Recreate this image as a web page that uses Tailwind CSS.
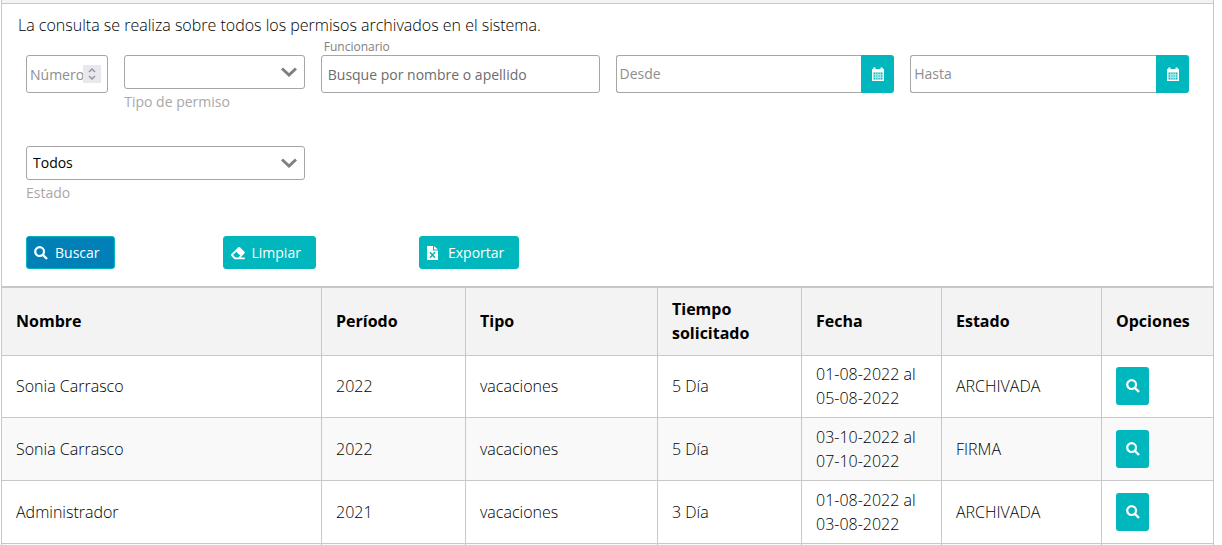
<!DOCTYPE html>
<html lang="es">
<head>
    <meta charset="UTF-8">
    <meta name="viewport" content="width=device-width, initial-scale=1.0">
    <title>Permisos archivados</title>
    <script src="https://cdn.jsdelivr.net/npm/@tailwindcss/browser@4"></script>
    <style>
        body { font-family: 'Open Sans', 'Noto Sans', sans-serif; }
        input[type=number] { appearance: textfield; }
    </style>
</head>
<body class="bg-white text-black">
    <svg class="hidden">
        <symbol id="icon-search" viewBox="0 0 14 14">
            <circle cx="5.6" cy="5.6" r="4.4" fill="none" stroke="currentColor" stroke-width="2.2"/>
            <path d="M9 9l4 4" stroke="currentColor" stroke-width="2.4"/>
        </symbol>
        <symbol id="icon-calendar" viewBox="0 0 14 14">
            <path fill="currentColor" fill-rule="evenodd" d="M1 2h1.300v-1.500h2.200v1.500h5v-1.500h2.200v1.500h1.300v12h-12zM2.500 5.500v7h9v-7z"/>
            <path d="M2.500 7.900h9M2.500 10.200h9M4.800 5.500v7M7 5.500v7M9.200 5.500v7" stroke="currentColor" stroke-width="1" opacity=".8"/>
        </symbol>
        <symbol id="icon-chevron" viewBox="0 0 16 10">
            <path d="M1 1.500l7 6.500 7-6.500" fill="none" stroke="currentColor" stroke-width="3"/>
        </symbol>
    </svg>

    <main class="h-screen overflow-hidden pl-px pr-2">
        <div class="border-x border-[#c8c8c8]">
            <div class="h-1 border-b border-[#c8c8c8] bg-[#f3f3f3]"></div>

            <!-- Filtros -->
            <form class="px-4 pt-[9px] pb-[17px]">
                <p class="font-light leading-6">La consulta se realiza sobre todos los permisos archivados en el sistema.</p>

                <div class="grid grid-cols-12 gap-x-4 px-2 pt-[18px] text-sm">
                    <div class="relative col-span-1 h-[91px]">
                        <input type="number" placeholder="Número" aria-label="Número" class="h-[38px] w-full rounded-[3px] border border-[#a6a6a6] pl-[3px] placeholder:text-[#8e8e8e]">
                        <span class="absolute top-[10px] right-[7px] flex h-[18px] w-[18px] items-center justify-center bg-[#e9e9ed] text-[#8f8f9d]">
                            <svg class="h-3 w-2" viewBox="0 0 8 12" fill="none" stroke="currentColor" stroke-width="1.400"><path d="M1 4l3-3 3 3M1 8l3 3 3-3"/></svg>
                        </span>
                    </div>
                    <div class="relative col-span-2">
                        <select id="tipo" class="block h-[34px] w-full appearance-none rounded-[3px] border border-[#a6a6a6] bg-white px-1.5">
                            <option></option>
                            <option>vacaciones</option>
                        </select>
                        <svg class="pointer-events-none absolute top-3 right-2 h-[10px] w-4 text-[#808080]"><use href="#icon-chevron"/></svg>
                        <label for="tipo" class="mt-[3px] block text-[#a8a8a8]">Tipo de permiso</label>
                    </div>
                    <div class="relative col-span-3">
                        <label for="funcionario" class="absolute -top-4 left-[3px] text-xs text-[#808080]">Funcionario</label>
                        <input id="funcionario" type="text" placeholder="Busque por nombre o apellido" class="h-[38px] w-full rounded-[3px] border border-[#a6a6a6] px-1.5 placeholder:text-[#6c6c6c]">
                    </div>
                    <div class="col-span-3 flex h-[38px]">
                        <input type="text" placeholder="Desde" aria-label="Desde" class="min-w-0 flex-1 rounded-l-[3px] border border-r-0 border-[#a6a6a6] px-[3px] placeholder:text-[#8e8e8e]">
                        <button type="button" aria-label="Abrir calendario desde" class="flex w-[33px] items-center justify-center rounded-r-[3px] bg-[#00b7bd] text-white">
                            <svg class="h-[14px] w-[14px]"><use href="#icon-calendar"/></svg>
                        </button>
                    </div>
                    <div class="col-span-3 flex h-[38px]">
                        <input type="text" placeholder="Hasta" aria-label="Hasta" class="min-w-0 flex-1 rounded-l-[3px] border border-r-0 border-[#a6a6a6] px-[3px] placeholder:text-[#8e8e8e]">
                        <button type="button" aria-label="Abrir calendario hasta" class="flex w-[33px] items-center justify-center rounded-r-[3px] bg-[#00b7bd] text-white">
                            <svg class="h-[14px] w-[14px]"><use href="#icon-calendar"/></svg>
                        </button>
                    </div>

                    <div class="relative col-span-3 h-[90px]">
                        <select id="estado" class="block h-[34px] w-full appearance-none rounded-[3px] border border-[#a6a6a6] bg-white px-1.5">
                            <option>Todos</option>
                            <option>ARCHIVADA</option>
                            <option>FIRMA</option>
                        </select>
                        <svg class="pointer-events-none absolute top-3 right-2 h-[10px] w-4 text-[#808080]"><use href="#icon-chevron"/></svg>
                        <label for="estado" class="mt-[3px] block text-[#a8a8a8]">Estado</label>
                    </div>
                </div>

                <!-- Acciones -->
                <div class="grid grid-cols-12 gap-x-4 px-2 text-sm text-white">
                    <div class="col-span-2">
                        <button type="submit" class="flex h-[33px] items-center gap-[7px] rounded-[3px] border border-[#00b7bd] bg-[#0080b7] pr-[14px] pl-[7px]">
                            <svg class="h-[14px] w-[14px]"><use href="#icon-search"/></svg>
                            Buscar
                        </button>
                    </div>
                    <div class="col-span-2">
                        <button type="reset" class="flex h-[33px] items-center gap-[7px] rounded-[3px] border border-[#00b7bd] bg-[#00b7bd] pr-[14px] pl-[7px]">
                            <svg class="h-[14px] w-[14px]" viewBox="0 0 14 14">
                                <path fill="currentColor" fill-rule="evenodd" d="M.4 8.100L7.200 1.300q.9-.7 1.800 0l4.400 4.400q.8.900 0 1.800l-3.800 3.900h4.200v1.800H3.500L.4 10q-.8-.9 0-1.900zM5.200 5.700L2.100 8.900l2.400 2.500h2.900l1.900-1.800z"/>
                            </svg>
                            Limpiar
                        </button>
                    </div>
                    <div class="col-span-2">
                        <button type="button" class="flex h-[33px] items-center gap-[10px] rounded-[3px] border border-[#00b7bd] bg-[#00b7bd] pr-[14px] pl-[7px]">
                            <svg class="h-[14px] w-[11px]" viewBox="0 0 11 14">
                                <path fill="currentColor" d="M0 0h6v4.500h5V14H0zM7 0l4 3.500H7z"/>
                                <path d="M3 6.200l5 5.600M8 6.200l-5 5.600" stroke="#00b7bd" stroke-width="1.500"/>
                            </svg>
                            Exportar
                        </button>
                    </div>
                </div>
            </form>
        </div>

        <!-- Resultados -->
        <table class="w-full table-fixed border-collapse text-left font-light">
            <colgroup>
                <col>
                <col class="w-36">
                <col class="w-48">
                <col class="w-36">
                <col class="w-[140px]">
                <col class="w-40">
                <col class="w-28">
            </colgroup>
            <thead>
                <tr class="h-[68px] border-t-2 border-[#c8c8c8] bg-[#f3f3f3]">
                    <th class="border-x border-b border-[#c8c8c8] px-[14px] font-bold">Nombre</th>
                    <th class="border-x border-b border-[#c8c8c8] px-[14px] font-bold">Período</th>
                    <th class="border-x border-b border-[#c8c8c8] px-[14px] font-bold">Tipo</th>
                    <th class="border-x border-b border-[#c8c8c8] px-[14px] font-bold">Tiempo solicitado</th>
                    <th class="border-x border-b border-[#c8c8c8] px-[14px] font-bold">Fecha</th>
                    <th class="border-x border-b border-[#c8c8c8] px-[14px] font-bold">Estado</th>
                    <th class="border-x border-b border-[#c8c8c8] px-[14px] font-bold">Opciones</th>
                </tr>
            </thead>
            <tbody>
                <tr class="h-[62px]">
                    <td class="border border-[#c8c8c8] px-[14px]">Sonia Carrasco</td>
                    <td class="border border-[#c8c8c8] px-[14px]">2022</td>
                    <td class="border border-[#c8c8c8] px-[14px]">vacaciones</td>
                    <td class="border border-[#c8c8c8] px-[14px]">5 Día</td>
                    <td class="border border-[#c8c8c8] px-[14px]">01-08-2022 al 05-08-2022</td>
                    <td class="border border-[#c8c8c8] px-[14px]">ARCHIVADA</td>
                    <td class="border border-[#c8c8c8] px-[14px]">
                        <button type="button" aria-label="Ver permiso" class="flex h-[38px] w-[33px] items-center justify-center rounded-[3px] bg-[#00b7bd] text-white">
                            <svg class="h-[14px] w-[14px]"><use href="#icon-search"/></svg>
                        </button>
                    </td>
                </tr>
                <tr class="h-[63px] bg-[#f9f9f9]">
                    <td class="border border-[#c8c8c8] px-[14px]">Sonia Carrasco</td>
                    <td class="border border-[#c8c8c8] px-[14px]">2022</td>
                    <td class="border border-[#c8c8c8] px-[14px]">vacaciones</td>
                    <td class="border border-[#c8c8c8] px-[14px]">5 Día</td>
                    <td class="border border-[#c8c8c8] px-[14px]">03-10-2022 al 07-10-2022</td>
                    <td class="border border-[#c8c8c8] px-[14px]">FIRMA</td>
                    <td class="border border-[#c8c8c8] px-[14px]">
                        <button type="button" aria-label="Ver permiso" class="flex h-[38px] w-[33px] items-center justify-center rounded-[3px] bg-[#00b7bd] text-white">
                            <svg class="h-[14px] w-[14px]"><use href="#icon-search"/></svg>
                        </button>
                    </td>
                </tr>
                <tr class="h-[63px]">
                    <td class="border border-[#c8c8c8] px-[14px]">Administrador</td>
                    <td class="border border-[#c8c8c8] px-[14px]">2021</td>
                    <td class="border border-[#c8c8c8] px-[14px]">vacaciones</td>
                    <td class="border border-[#c8c8c8] px-[14px]">3 Día</td>
                    <td class="border border-[#c8c8c8] px-[14px]">01-08-2022 al 03-08-2022</td>
                    <td class="border border-[#c8c8c8] px-[14px]">ARCHIVADA</td>
                    <td class="border border-[#c8c8c8] px-[14px]">
                        <button type="button" aria-label="Ver permiso" class="flex h-[38px] w-[33px] items-center justify-center rounded-[3px] bg-[#00b7bd] text-white">
                            <svg class="h-[14px] w-[14px]"><use href="#icon-search"/></svg>
                        </button>
                    </td>
                </tr>
                <tr class="h-[62px] bg-[#f9f9f9]">
                    <td class="border border-[#c8c8c8]"></td>
                    <td class="border border-[#c8c8c8]"></td>
                    <td class="border border-[#c8c8c8]"></td>
                    <td class="border border-[#c8c8c8]"></td>
                    <td class="border border-[#c8c8c8]"></td>
                    <td class="border border-[#c8c8c8]"></td>
                    <td class="border border-[#c8c8c8]"></td>
                </tr>
            </tbody>
        </table>
    </main>
</body>
</html>
